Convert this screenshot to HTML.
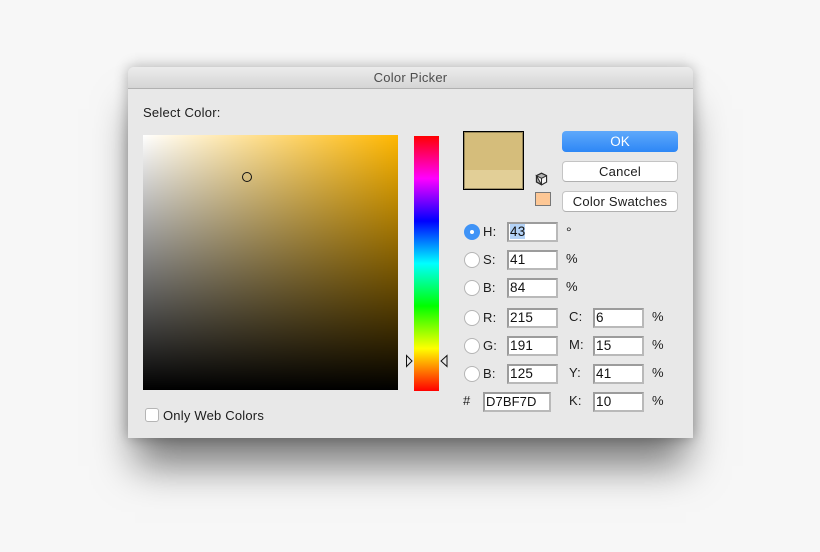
<!DOCTYPE html>
<html><head><meta charset="utf-8">
<style>
html,body{margin:0;padding:0;width:820px;height:552px;overflow:hidden;background:#f7f7f7;font-family:"Liberation Sans",sans-serif;color:#1c1c1c}
.abs,.t,.i,.r,.b{position:absolute}
#win{left:128px;top:67px;width:565px;height:371px;position:absolute;background:#e8e8e8;border-radius:6px 6px 0 0;box-shadow:0 35px 38px -7px rgba(0,0,0,.5),0 0 14px rgba(0,0,0,.3)}
#tb{left:128px;top:67px;width:565px;height:21px;position:absolute;border-radius:6px 6px 0 0;background:linear-gradient(#ececec,#d5d5d5);border-bottom:1px solid #b1b1b1;text-align:center;font-size:13px;line-height:22px;color:#4d4d4d;letter-spacing:.25px}
.t{font-size:13px;line-height:16px;white-space:nowrap;letter-spacing:.2px}
.i{box-sizing:border-box;height:20px;background:#fff;border:2px solid #9c9c9c;border-right-color:#b9b9b9;border-bottom-color:#b9b9b9;font-size:13.5px;line-height:15px;padding-left:1px;letter-spacing:.2px;color:#111}
.i.w{left:507px;width:51px}
.i.c{left:593px;width:51px}
.r{left:464px;width:16px;height:16px;box-sizing:border-box;border-radius:50%;background:#fff;border:1px solid #b5b5b5}
.b{left:562px;width:116px;height:21px;box-sizing:border-box;border-radius:4px;background:#fff;border:1px solid #c4c4c4;border-bottom-color:#b0b0b0;text-align:center;font-size:13px;line-height:19px;letter-spacing:.25px;color:#1c1c1c}
</style></head><body>
<div id="win"></div>
<div id="tb">Color Picker</div>
<div class="t" style="left:143px;top:105px;letter-spacing:.25px">Select Color:</div>

<div class="abs" style="left:143px;top:135px;width:255px;height:255px;background:linear-gradient(to top,#000,rgba(0,0,0,0)),linear-gradient(to right,#fff,#ffb700)"></div>
<div class="abs" style="left:242px;top:172px;width:10px;height:10px;box-sizing:border-box;border:1px solid #111;border-radius:50%"></div>

<div class="abs" style="left:414px;top:136px;width:25px;height:255px;background:linear-gradient(to bottom,#f00 0%,#f0f 16.67%,#00f 33.33%,#0ff 50%,#0f0 66.67%,#ff0 83.33%,#f00 100%)"></div>
<svg class="abs" style="left:404px;top:354px" width="44" height="14"><path d="M2.5 1.5 L8 7 L2.5 12.5 Z M43 1.5 L37 7 L43 12.5 Z" fill="#e8e8e8" stroke="#111" stroke-width="1"/></svg>

<div class="abs" style="left:463px;top:131px;width:61px;height:59px;box-sizing:border-box;border:1px solid #000;box-shadow:inset 0 0 0 1px rgba(0,0,0,.3);background:linear-gradient(#d5bd7b 0,#d5bd7b 38px,#e2cf97 38px)"></div>
<svg class="abs" style="left:535px;top:172px" width="13" height="14" viewBox="0 0 13 14"><path d="M6.5 1.2 L11.5 3.6 V10 L6.5 12.8 L1.5 10 V3.6 Z" fill="#b5b5b5" stroke="#2a2a2a" stroke-width="1.3"/><path d="M1.5 3.8 L6.5 6.3 L11.5 3.8 L11.5 10 L6.5 12.8 Z" fill="#f2f2f2" stroke="#2a2a2a" stroke-width="1"/><path d="M6.5 6.3 V12.8" stroke="#2a2a2a" stroke-width="1"/></svg>
<div class="abs" style="left:535px;top:192px;width:16px;height:14px;box-sizing:border-box;border:1px solid #777;background:#fdc795"></div>

<div class="b" style="top:131px;background:linear-gradient(#5fa9fb,#2d87f6);border:0;color:#fff;font-size:13.5px;line-height:21px;letter-spacing:0">OK</div>
<div class="b" style="top:161px">Cancel</div>
<div class="b" style="top:191px">Color Swatches</div>

<div class="r" style="top:224px;background:#3f93f6;border-color:#3f93f6"></div>
<div class="abs" style="left:470px;top:230px;width:4px;height:4px;border-radius:50%;background:#fff"></div>
<div class="r" style="top:252px"></div>
<div class="r" style="top:280px"></div>
<div class="r" style="top:310px"></div>
<div class="r" style="top:338px"></div>
<div class="r" style="top:366px"></div>

<div class="t" style="left:483px;top:224px">H:</div>
<div class="t" style="left:483px;top:252px">S:</div>
<div class="t" style="left:483px;top:280px">B:</div>
<div class="t" style="left:483px;top:310px">R:</div>
<div class="t" style="left:483px;top:338px">G:</div>
<div class="t" style="left:483px;top:366px">B:</div>
<div class="t" style="left:463px;top:393px">#</div>

<div class="i w" style="top:222px"><span style="background:#b4d3f7">43</span></div>
<div class="i w" style="top:250px">41</div>
<div class="i w" style="top:278px">84</div>
<div class="i w" style="top:308px">215</div>
<div class="i w" style="top:336px">191</div>
<div class="i w" style="top:364px">125</div>
<div class="i" style="left:483px;width:68px;top:392px;font-size:13px;letter-spacing:.1px">D7BF7D</div>

<div class="t" style="left:566px;top:224px;font-size:14px">°</div>
<div class="t" style="left:566px;top:251px">%</div>
<div class="t" style="left:566px;top:279px">%</div>

<div class="t" style="left:569px;top:309px">C:</div>
<div class="t" style="left:569px;top:337px">M:</div>
<div class="t" style="left:569px;top:365px">Y:</div>
<div class="t" style="left:569px;top:393px">K:</div>

<div class="i c" style="top:308px">6</div>
<div class="i c" style="top:336px">15</div>
<div class="i c" style="top:364px">41</div>
<div class="i c" style="top:392px">10</div>

<div class="t" style="left:652px;top:309px">%</div>
<div class="t" style="left:652px;top:337px">%</div>
<div class="t" style="left:652px;top:365px">%</div>
<div class="t" style="left:652px;top:393px">%</div>

<div class="abs" style="left:145px;top:408px;width:14px;height:14px;box-sizing:border-box;background:#fff;border:1px solid #b5b5b5;border-radius:3px"></div>
<div class="t" style="left:163px;top:408px">Only Web Colors</div>
</body></html>
